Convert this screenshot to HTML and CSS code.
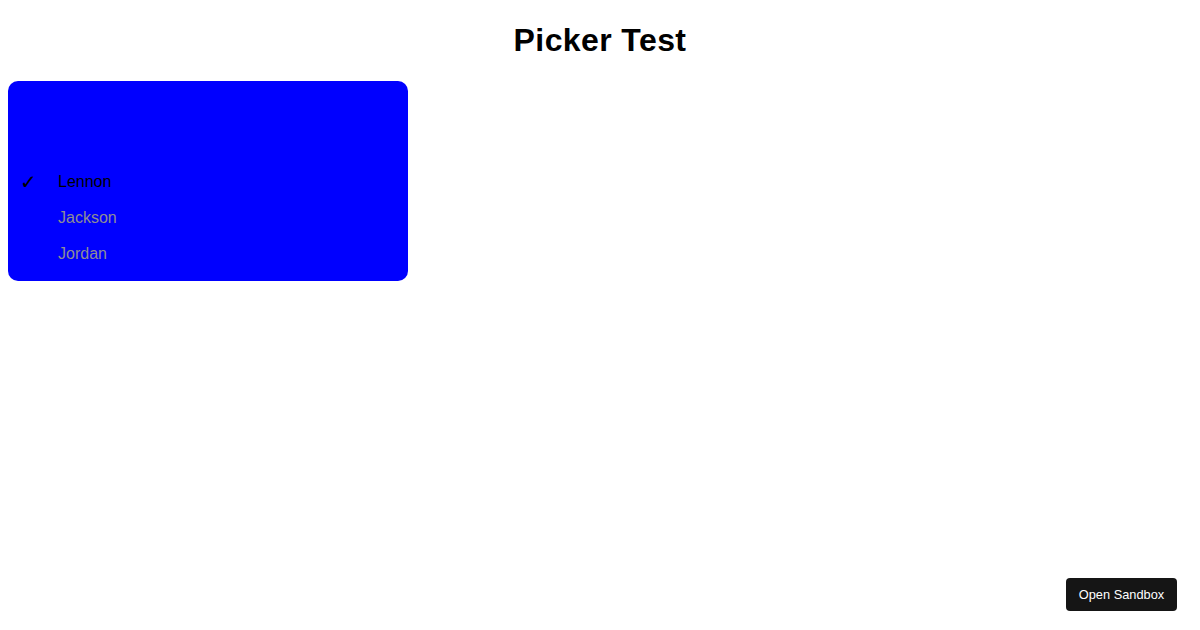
FILE: index.html
```html
<!DOCTYPE html>
<html>
<head>
<meta charset="utf-8">
<link rel="stylesheet" href="styles.css">
</head>
<body>
<h1 class="title">Picker Test</h1>
<div class="picker">
  <ul class="picker-list">
    <li class="picker-item selected"><span class="check">✓</span><span class="label">Lennon</span></li>
    <li class="picker-item"><span class="check"></span><span class="label">Jackson</span></li>
    <li class="picker-item"><span class="check"></span><span class="label">Jordan</span></li>
  </ul>
</div>
<button class="sandbox-btn">Open Sandbox</button>
</body>
</html>
```

FILE: styles.css
```css
html, body {
  background: #fff;
}
body {
  margin: 0;
  padding: 8px;
  font-family: "Liberation Sans", Arial, sans-serif;
}
.title {
  font-family: "Liberation Sans", Arial, sans-serif;
  font-size: 32px;
  font-weight: bold;
  letter-spacing: 0.4px;
  text-align: center;
  margin: 14px 0 22px;
  line-height: 37px;
  color: #000;
}
.picker {
  width: 400px;
  height: 200px;
  background: #0000ff;
  border-radius: 10px;
  overflow: hidden;
}
.picker-list {
  list-style: none;
  margin: 0;
  padding: 83px 0 0 0;
}
.picker-item {
  height: 36px;
  display: flex;
  align-items: center;
  font-size: 16px;
  color: #8e8e93;
}
.picker-item.selected {
  color: #000;
}
.check {
  width: 50px;
  padding-left: 12px;
  box-sizing: border-box;
  font-family: "DejaVu Sans", sans-serif;
  font-size: 20px;
  line-height: 20px;
  color: #000;
}
.sandbox-btn {
  position: fixed;
  right: 23px;
  bottom: 19px;
  width: 111px;
  height: 33px;
  background: #151515;
  color: #fff;
  border: none;
  border-radius: 4px;
  font-family: "Liberation Sans", Arial, sans-serif;
  font-size: 12.8px;
  padding: 0;
}
```
